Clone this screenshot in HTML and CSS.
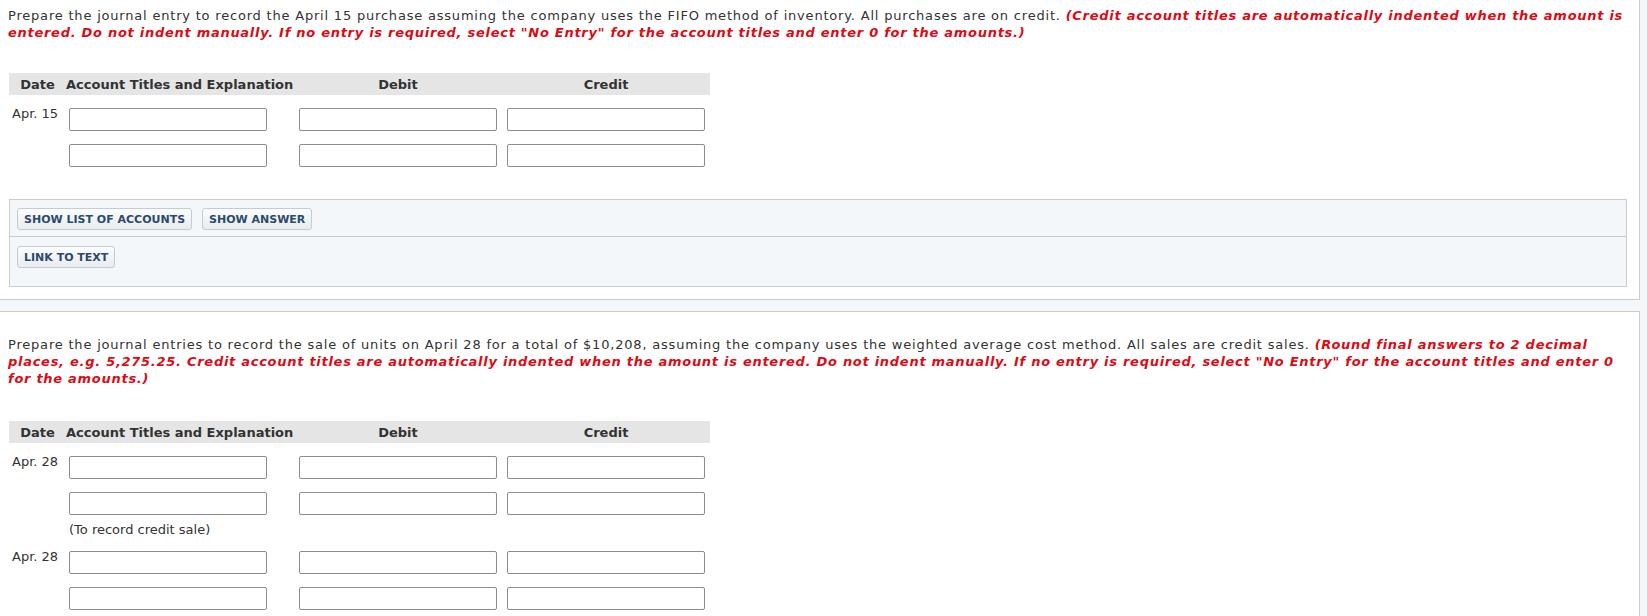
FILE: index.html
```html
<!DOCTYPE html>
<html lang="en">
<head>
    <meta charset="UTF-8">
    <title>Journal entries</title>
    <link rel="stylesheet" href="styles.css">
</head>
<body>
    <div class="question first">
        <p class="prompt">Prepare the journal entry to record the April 15 purchase assuming the company uses the FIFO method of inventory. All purchases are on credit. <em>(Credit account titles are automatically indented when the amount is<br>entered. Do not indent manually. If no entry is required, select "No Entry" for the account titles and enter 0 for the amounts.)</em></p>

        <div class="journal">
            <div class="journal-head">
                <span class="c-date">Date</span>
                <span class="c-acct">Account Titles and Explanation</span>
                <span class="c-num">Debit</span>
                <span class="c-num">Credit</span>
            </div>
            <div class="journal-row">
                <span class="date">Apr. 15</span>
                <span class="cell acct"><input type="text"></span>
                <span class="cell"><input type="text"></span>
                <span class="cell"><input type="text"></span>
            </div>
            <div class="journal-row">
                <span class="date"></span>
                <span class="cell acct"><input type="text"></span>
                <span class="cell"><input type="text"></span>
                <span class="cell"><input type="text"></span>
            </div>
        </div>

        <div class="tools">
            <div class="tools-row">
                <button class="tool-btn">SHOW LIST OF ACCOUNTS</button>
                <button class="tool-btn">SHOW ANSWER</button>
            </div>
            <div class="tools-row last">
                <button class="tool-btn">LINK TO TEXT</button>
            </div>
        </div>
    </div>

    <div class="question second">
        <p class="prompt">Prepare the journal entries to record the sale of units on April 28 for a total of $10,208, assuming the company uses the weighted average cost method. All sales are credit sales. <em>(Round final answers to 2 decimal<br>places, e.g. 5,275.25. Credit account titles are automatically indented when the amount is entered. Do not indent manually. If no entry is required, select "No Entry" for the account titles and enter 0<br>for the amounts.)</em></p>

        <div class="journal">
            <div class="journal-head">
                <span class="c-date">Date</span>
                <span class="c-acct">Account Titles and Explanation</span>
                <span class="c-num">Debit</span>
                <span class="c-num">Credit</span>
            </div>
            <div class="journal-row">
                <span class="date">Apr. 28</span>
                <span class="cell acct"><input type="text"></span>
                <span class="cell"><input type="text"></span>
                <span class="cell"><input type="text"></span>
            </div>
            <div class="journal-row">
                <span class="date"></span>
                <span class="cell acct"><input type="text"></span>
                <span class="cell"><input type="text"></span>
                <span class="cell"><input type="text"></span>
            </div>
            <div class="note">(To record credit sale)</div>
            <div class="journal-row">
                <span class="date">Apr. 28</span>
                <span class="cell acct"><input type="text"></span>
                <span class="cell"><input type="text"></span>
                <span class="cell"><input type="text"></span>
            </div>
            <div class="journal-row">
                <span class="date"></span>
                <span class="cell acct"><input type="text"></span>
                <span class="cell"><input type="text"></span>
                <span class="cell"><input type="text"></span>
            </div>
        </div>
    </div>
</body>
</html>
```

FILE: styles.css
```css
* {
    box-sizing: border-box;
}
body {
    margin: 0;
    background-color: #f4f7fa;
    font-family: Verdana, "DejaVu Sans", sans-serif;
    font-size: 13px;
    line-height: 17px;
    color: #333;
}
.question {
    width: 1640px;
    background-color: #fff;
    border-right: 1px solid #c9cdd2;
    border-bottom: 1px solid #c9cdd2;
    padding: 7px 4px 12px 8px;
}
.question.second {
    margin-top: 11px;
    border-top: 1px solid #c9cdd2;
    padding-top: 24px;
}
.prompt {
    margin: 0;
    letter-spacing: 0.8px;
}
.prompt em {
    color: #dd0a14;
    font-weight: bold;
    letter-spacing: 0.72px;
}

/* tabla del asiento */
.journal {
    width: 701px;
    margin: 32px 0 0 1px;
}
.second .journal {
    margin-top: 34px;
}
.journal-head,
.journal-row {
    display: grid;
    grid-template-columns: 57px 228px 208px 208px;
}
.journal-head {
    height: 22px;
    align-items: center;
    background-color: #e5e5e5;
    font-weight: bold;
}
.c-date,
.c-num {
    text-align: center;
}
.journal-row {
    padding-top: 13px;
    align-items: start;
}
.date {
    padding-left: 3px;
    margin-top: -3px;
}
.cell {
    display: flex;
    justify-content: center;
}
.cell.acct {
    justify-content: flex-start;
    padding-left: 3px;
}
.cell input {
    width: 198px;
    height: 23px;
    margin: 0;
    border: 1px solid #8c8c8c;
    border-radius: 2px;
    background-color: #fff;
}
.note {
    margin: 6px 0 0 60px;
}

/* barra de herramientas */
.tools {
    margin: 32px 0 0 1px;
    width: 1618px;
    border: 1px solid #c9cdd2;
    background-color: #f4f7fa;
}
.tools-row {
    display: flex;
    gap: 10px;
    padding: 8px 7px 6px;
    border-bottom: 1px solid #c9cdd2;
}
.tools-row.last {
    border-bottom: none;
    padding: 9px 7px 18px;
}
.tool-btn {
    height: 22px;
    padding: 0 6px;
    font-family: Verdana, "DejaVu Sans", sans-serif;
    font-size: 11px;
    font-weight: bold;
    color: #2c4a6b;
    background: linear-gradient(#fbfcfd, #e8ecf0);
    border: 1px solid #c3cbd3;
    border-radius: 3px;
}
```
